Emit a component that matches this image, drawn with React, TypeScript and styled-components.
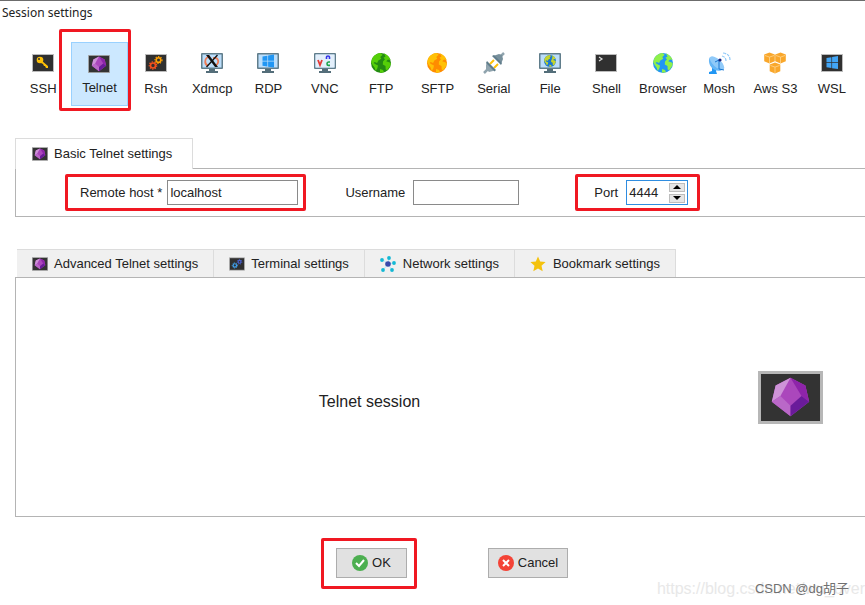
import React, { useState } from "react";
import type { ReactNode } from "react";
import styled, { createGlobalStyle, css } from "styled-components";

const GlobalStyle = createGlobalStyle`
  * { box-sizing: border-box; }
  body {
    margin: 0;
    background: #fff;
    color: #222;
    font: 13px/16px "Liberation Sans", Arial, sans-serif;
    overflow: hidden;
  }
  button, input { font: inherit; color: inherit; }
`;

const Window = styled.main`
  position: relative;
  display: flex;
  flex-direction: column;
  min-height: 100vh;
  border-top: 1px solid #6c6c6c;
`;

const Title = styled.h1`
  margin: 0;
  padding: 4px 2px;
  font: 400 12px/16px "Noto Sans", "Open Sans", sans-serif;
`;

const outline = css`
  content: "";
  position: absolute;
  border: 3px solid #f01822;
  border-radius: 2px;
  pointer-events: none;
`;

const Toolbar = styled.nav`
  display: grid;
  grid-template-columns: repeat(15, minmax(0, 1fr));
  margin: 17px 5px 0 15px;
`;

const SessionButton = styled.button<{ $active: boolean }>`
  position: relative;
  display: flex;
  flex-direction: column;
  align-items: center;
  gap: 7px;
  height: 64px;
  padding: 9px 0 0;
  border: 1px solid transparent;
  background: none;
  white-space: nowrap;
  ${(p) => p.$active && css`
    padding-top: 12px;
    background: #cce8ff;
    border-color: #99d1ff;
    &::after { ${outline} inset: -14px -4px -6px -13px; }
  `}
`;

const Tabs = styled.div<{ $raised?: boolean }>`
  display: flex;
  position: relative;
  margin: ${(p) => (p.$raised ? "32px 0 0 15px" : "32px 0 0 17px")};
`;

const Tab = styled.button<{ $selected?: boolean }>`
  display: flex;
  align-items: center;
  gap: 6px;
  height: 28px;
  padding: 0 15px;
  background: #f0f0f0;
  border: solid #dcdcdc;
  border-width: 1px 1px 0 0;
  white-space: nowrap;
  &:nth-child(n + 3) { gap: 7px; }
  ${(p) => p.$selected && css`
    height: 31px;
    margin-bottom: -1px;
    padding: 0 20px 0 16px;
    background: #fff;
    border-width: 1px 1px 0 1px;
  `}
`;

const BasicPanel = styled.section`
  display: flex;
  align-items: center;
  height: 49px;
  margin-left: 15px;
  padding-left: 51px;
  border: solid #b4b4b4;
  border-width: 1px 0 1px 1px;
`;

const Field = styled.div<{ $marked?: boolean }>`
  position: relative;
  display: flex;
  align-items: center;
  gap: 5px;
  padding: 0 6px 0 13px;
  flex: none;
  ${(p) => p.$marked && css`&::after { ${outline} inset: -6px -2px -6px -2px; }`}
`;

const TextInput = styled.input<{ $width: number }>`
  width: ${(p) => p.$width}px;
  height: 25px;
  padding: 0 2px;
  border: 1px solid #8a8a8a;
  border-radius: 0;
  background: #fff;
  outline: none;
`;

const UserField = styled(Field)`
  margin-left: 28px;
  gap: 8px;
`;

const PortField = styled(Field)`
  margin-left: 56px;
  padding-right: 10px;
  gap: 8px;
  &&::after { inset: -6px -2px -6px -6px; }
`;

const SpinBox = styled.div`
  display: flex;
  align-items: center;
  border: 1px solid #2f8de0;
  padding-right: 2px;
  background: #fff;
  input { height: 23px; border: 0; }
`;

const Spinner = styled.div`
  display: flex;
  flex-direction: column;
  gap: 2px;
`;

const SpinButton = styled.button`
  display: flex;
  align-items: center;
  justify-content: center;
  width: 16px;
  height: 9px;
  padding: 0;
  border: 1px solid #bdbdbd;
  background: #e6e6e6;
`;

const SessionPanel = styled.section`
  display: grid;
  grid-template-columns: 707px 1fr;
  align-items: center;
  height: 240px;
  margin-left: 15px;
  border: solid #b4b4b4;
  border-width: 1px 0 1px 1px;
  p { margin: 0; padding-top: 10px; text-align: center; font-size: 16px; line-height: 20px; }
`;

const Preview = styled.div`
  width: 65px;
  height: 53px;
  margin-left: 35px;
  border: 3px solid #b7b7b7;
  background: #333;
`;

const Actions = styled.footer`
  display: flex;
  gap: 81px;
  padding: 31px 0 0 336px;
`;

const ActionButton = styled.button<{ $marked?: boolean }>`
  position: relative;
  display: flex;
  align-items: center;
  justify-content: center;
  gap: 4px;
  height: 30px;
  width: ${(p) => (p.$marked ? 71 : 80)}px;
  padding: 0;
  background: #e1e1e1;
  border: 1px solid #adadad;
  ${(p) => p.$marked && css`&::after { ${outline} inset: -11px -11px -12px -16px; }`}
`;

const Watermark = styled.div`
  position: absolute;
  right: 0;
  bottom: 6px;
  color: #e8e8e8;
  font-size: 16px;
  line-height: 20px;
  white-space: nowrap;
`;

const Credit = styled.div`
  position: absolute;
  right: 16px;
  bottom: 6px;
  color: #707070;
  font: 13px/20px "Liberation Sans", "Noto Sans CJK SC", sans-serif;
  white-space: nowrap;
`;

/* ---------- icons ---------- */

const Svg = ({ children, w = 24, h = 22, box = "0 0 24 22" }: { children: ReactNode; w?: number; h?: number; box?: string }) => (
  <svg width={w} height={h} viewBox={box} aria-hidden="true">{children}</svg>
);

const DarkTile = () => <rect x="1.5" y="2.5" width="21" height="17" fill="#303030" stroke="#bcbcbc" />;

const Gem = () => (
  <>
    <path d="M29.5 4 14 12l-4 17 19.500 15L49 29l-4-17z" fill="#ab47bc" />
    <path d="M29.500 4 14 12l-4 17 9-6z" fill="#ce93d8" />
    <path d="M29.500 4 45 12l4 17-8-6z" fill="#8e24aa" />
    <path d="m10 29 9-6 10.500 10v11z" fill="#ba68c8" />
    <path d="m49 29-8-6-11.500 10v11z" fill="#6a1b9a" />
  </>
);

const gear = (x: number, y: number, r: number, color: string) => (
  <g fill="none" stroke={color}>
    <circle cx={x} cy={y} r={r} strokeWidth="1.600" />
    <circle cx={x} cy={y} r={r + 1.2} strokeWidth="1.200" strokeDasharray="1.300 1.300" />
  </g>
);

const Monitor = ({ children }: { children: ReactNode }) => (
  <Svg>
    <path d="M9 17h6v2h3v2H6v-2h3z" fill="#546e7a" />
    <rect x="1" y="1" width="22" height="16" rx="1" fill="#607d8b" />
    <rect x="2.500" y="2.500" width="19" height="13" fill="#bbdefb" />
    {children}
  </Svg>
);

const Globe = ({ sea, land, cx = 12, cy = 11, r = 10 }: { sea: string; land: string; cx?: number; cy?: number; r?: number }) => (
  <g transform={`translate(${cx} ${cy}) scale(${r / 10})`}>
    <circle r="10" fill={sea} />
    <path d="M-8.500-5.200C-6-8.500-3-9.800-.5-9.900l2.200 1.600-2.400 2.400 1 1.700-3 1.600-1.200 2.500-2.400-1-1.200 1.200 2 1.200L-3 2.500l-.6 2.700-1.700 2.700-1-3.200-2-2.700L-9.900-1z" fill={land} />
    <path d="M3-9.500c3 1 5.500 3.500 6.500 6.500L7-3.500 5.200-1.800l3.500 1.300 1.200 1-1 3-2.700 3.800-1.500-.8-.2-3.500L1.800 1.500 2-1.500l2-2.200-1.500-1.500 2-1.200zM-1 6l3 1 1 2.300-4 .5z" fill={land} />
  </g>
);

const WindowsLogo = ({ color }: { color: string }) => (
  <path d="m6.500 6 4.900-.8v5H6.500zM12.100 5 18 4.100v6.100h-5.900zM6.500 11h4.900v5l-4.900-.8zM12.100 11H18v6.100l-5.900-.9z" fill={color} />
);

const TelnetIcon = ({ small }: { small?: boolean }) => (
  <svg width={small ? 16 : 22} height={small ? 14 : 18} viewBox="0 0 59 49" preserveAspectRatio="xMidYMid meet" aria-hidden="true">
    <rect x="1" y="1" width="57" height="47" fill="#333" stroke="#aaa" strokeWidth="2" />
    <Gem />
  </svg>
);

const cube = (x: number, y: number) => (
  <g transform={`translate(${x} ${y})`}>
    <path d="m0-5.500 5.300 2v6.800L0 5.600l-5.300-2.300v-6.800z" fill="#f9a72b" />
    <path d="M-4.500-2.500 0-.9l4.500-1.600M0-.9V5" fill="none" stroke="#ffd591" strokeWidth=".8" />
  </g>
);

const sessions: { name: string; icon: ReactNode }[] = [
  { name: "SSH", icon: <Svg><DarkTile /><circle cx="9" cy="8" r="3.300" fill="#ffc107" /><circle cx="8" cy="7" r="1" fill="#303030" /><path d="m11 9 6 5v2h-2l-1-2-1 0-1-2-2-1" fill="#ffc107" /></Svg> },
  { name: "Telnet", icon: <TelnetIcon /> },
  { name: "Rsh", icon: <Svg><DarkTile />{gear(14.5, 8, 2.3, "#ffa000")}{gear(9, 13.5, 2.5, "#f4511e")}</Svg> },
  { name: "Xdmcp", icon: <Monitor><path d="M10 4C4 6 4 12 8 14m5-8c6-1 7 5 2 8" fill="none" stroke="#ef7c55" strokeWidth="1.800" /><path d="m6 3 3 0 9 12h-3z" fill="#111" /><path d="M17.500 3 6.500 15" stroke="#111" strokeWidth="1.300" /></Monitor> },
  { name: "RDP", icon: <Monitor><g transform="translate(0 -1.500)"><WindowsLogo color="#2196f3" /></g></Monitor> },
  { name: "VNC", icon: <Monitor><rect x="2.500" y="2.500" width="19" height="13" fill="#e3effb" /><path d="m5 8 2 5 2-5" fill="none" stroke="#e53935" strokeWidth="1.800" /><path d="M13.500 7V5q0-1 1.500-1t1.500 1v2" fill="none" stroke="#3434e8" strokeWidth="1.600" /><path d="M17 10h-1.500q-1.500 0-1.500 1.700t1.500 1.700H17" fill="none" stroke="#1ba34a" strokeWidth="1.600" /></Monitor> },
  { name: "FTP", icon: <Svg><Globe sea="#238b12" land="#55cf08" /></Svg> },
  { name: "SFTP", icon: <Svg><Globe sea="#ff8c00" land="#ffc107" /></Svg> },
  { name: "Serial", icon: <Svg><path d="m2 21 5-5m10-10 5-5" stroke="#90a4ae" strokeWidth="2.500" /><path d="m8 12 4-4m0 8 4-4" stroke="#ffc107" strokeWidth="2" /><path d="m5 10 8 8-2 1-4 1-3-3 0-4z" fill="#90a4ae" /><path d="m5 9 9 9-1.500 1.500L4 11z" fill="#607d8b" /><path d="m11 4 8 8 2-5-1-4-3-1z" fill="#78909c" /><path d="m10 4 9 9 1-2-8-8z" fill="#607d8b" /></Svg> },
  { name: "File", icon: <Monitor><Globe sea="#1976d2" land="#c6d52b" cy={9} r={6} /></Monitor> },
  { name: "Shell", icon: <Svg><DarkTile /><path d="m5 5 3 2-3 2" fill="none" stroke="#ddd" strokeWidth="1.200" /></Svg> },
  { name: "Browser", icon: <Svg><Globe sea="#2196f3" land="#8ff04a" /></Svg> },
  { name: "Mosh", icon: <Svg><path d="m5 15 5 1-1 3 1 3H2v-2l3-1z" fill="#2196f3" /><path d="M3 5c-2 3-1 8 2 11s8 4 12 1z" fill="#64b5f6" /><ellipse cx="10" cy="11" rx="9" ry="4" transform="rotate(42 10 11)" fill="#90caf9" /><path d="m8 10 4-2v9l5 1" fill="none" stroke="#1976d2" strokeWidth="1" /><circle cx="13" cy="8" r="1.600" fill="#1a237e" /><path d="M15 4q4 1 4 5M16 1q7 1 7 7" fill="none" stroke="#90caf9" strokeWidth="1.200" strokeDasharray="3 1" /></Svg> },
  { name: "Aws S3", icon: <Svg>{cube(6.5, 6)}{cube(17.5, 6)}{cube(12, 16)}</Svg> },
  { name: "WSL", icon: <Svg><DarkTile /><WindowsLogo color="#42a5f5" /></Svg> },
];

const TerminalIcon = () => (
  <Svg w={16} h={14} box="1 2 22 18"><DarkTile />{gear(15.5, 8, 2, "#4a62d0")}{gear(9, 13, 2.4, "#42a5f5")}</Svg>
);

const NetworkIcon = () => (
  <Svg w={16} h={16} box="0 0 16 16">
    <path d="M8 8 2 3m6 5 1-6m-1 6 6-1M8 8l-5 6m5-6 4 6" stroke="#b3e5fc" />
    <g fill="#14b8d4"><circle cx="2" cy="4" r="1.900" /><circle cx="9" cy="2" r="1.900" /><circle cx="14" cy="7" r="1.900" /><circle cx="3" cy="14" r="1.900" /><circle cx="12" cy="14" r="1.900" /></g>
    <circle cx="8" cy="8" r="2.800" fill="#3949ab" />
  </Svg>
);

const StarIcon = () => (
  <Svg w={16} h={16} box="0 0 16 16"><path d="m8 .5 2.200 5 5.400.5-4.100 3.700 1.200 5.500L8 12.400l-4.700 2.800 1.200-5.500L.4 6l5.400-.5z" fill="#f4c20d" /></Svg>
);

const StatusIcon = ({ color, d }: { color: string; d: string }) => (
  <Svg w={16} h={16} box="0 0 16 16"><circle cx="8" cy="8" r="8" fill={color} /><path d={d} fill="none" stroke="#fff" strokeWidth="2" /></Svg>
);

const settingTabs = [
  { name: "Advanced Telnet settings", icon: <TelnetIcon small /> },
  { name: "Terminal settings", icon: <TerminalIcon /> },
  { name: "Network settings", icon: <NetworkIcon /> },
  { name: "Bookmark settings", icon: <StarIcon /> },
];

export default function App() {
  const [active, setActive] = useState("Telnet");
  const [host, setHost] = useState("localhost");
  const [user, setUser] = useState("");
  const [port, setPort] = useState(4444);

  return (
    <>
      <GlobalStyle />
      <Window>
        <Title>Session settings</Title>
        <Toolbar aria-label="Session type">
          {sessions.map((s) => (
            <SessionButton key={s.name} $active={s.name === active} onClick={() => setActive(s.name)}>
              {s.icon}
              <span>{s.name}</span>
            </SessionButton>
          ))}
        </Toolbar>

        <Tabs $raised>
          <Tab $selected><TelnetIcon small />Basic Telnet settings</Tab>
        </Tabs>
        <BasicPanel>
          <Field $marked>
            <label htmlFor="host">Remote host *</label>
            <TextInput id="host" $width={131} value={host} onChange={(e) => setHost(e.target.value)} />
          </Field>
          <UserField>
            <label htmlFor="user">Username</label>
            <TextInput id="user" $width={106} value={user} onChange={(e) => setUser(e.target.value)} />
          </UserField>
          <PortField $marked>
            <label htmlFor="port">Port</label>
            <SpinBox>
              <TextInput id="port" $width={42} inputMode="numeric" value={port} onChange={(e) => setPort(Number(e.target.value) || 0)} />
              <Spinner>
                <SpinButton aria-label="Increase port" onClick={() => setPort(port + 1)}>
                  <Svg w={8} h={4} box="0 0 8 4"><path d="M0 4 4 0l4 4z" /></Svg>
                </SpinButton>
                <SpinButton aria-label="Decrease port" onClick={() => setPort(port - 1)}>
                  <Svg w={8} h={4} box="0 0 8 4"><path d="m0 0 4 4 4-4z" /></Svg>
                </SpinButton>
              </Spinner>
            </SpinBox>
          </PortField>
        </BasicPanel>

        <Tabs>
          {settingTabs.map((t) => (
            <Tab key={t.name}>{t.icon}{t.name}</Tab>
          ))}
        </Tabs>
        <SessionPanel>
          <p>Telnet session</p>
          <Preview>
            <Svg w={59} h={47} box="0 0 59 49"><Gem /></Svg>
          </Preview>
        </SessionPanel>

        <Actions>
          <ActionButton $marked><StatusIcon color="#4caf50" d="m4 8 3 3 5-6" />OK</ActionButton>
          <ActionButton><StatusIcon color="#f44336" d="m5 5 6 6m0-6-6 6" />Cancel</ActionButton>
        </Actions>

        <Watermark>https://blog.csdn.net/wu_over</Watermark>
        <Credit>CSDN @dg胡子</Credit>
      </Window>
    </>
  );
}
